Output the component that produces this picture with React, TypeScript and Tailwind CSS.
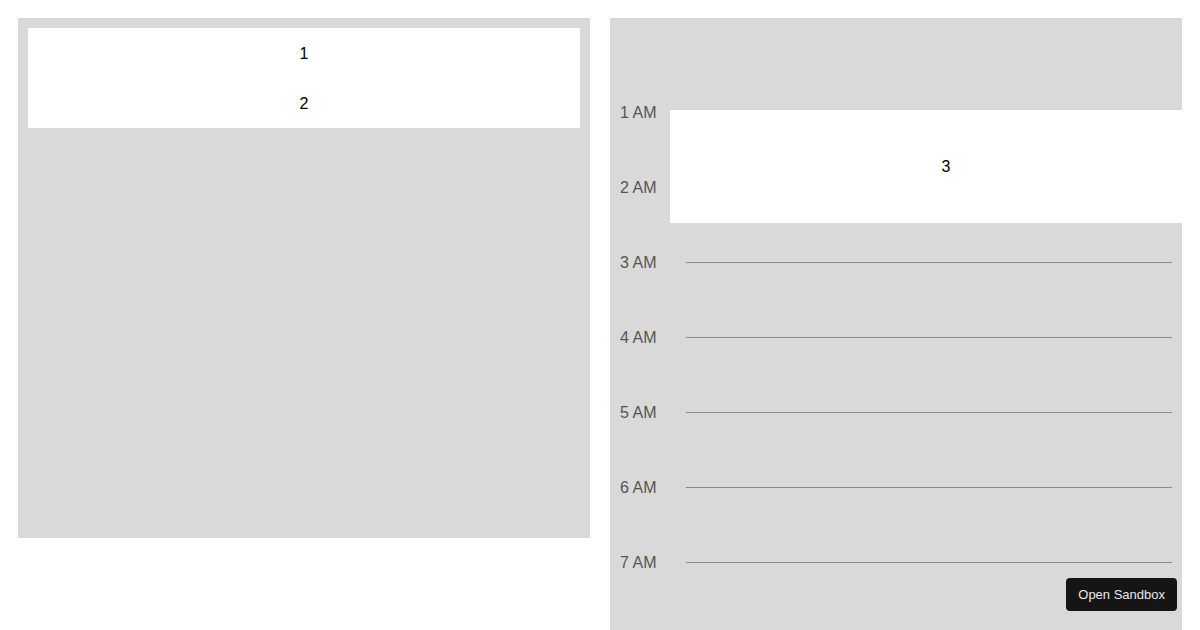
const hours = ["1 AM", "2 AM", "3 AM", "4 AM", "5 AM", "6 AM", "7 AM"];

function ListPanel() {
  return (
    <div className="h-[520px] w-[572px] shrink-0 bg-[#d9d9d9] p-[10px]">
      <div className="bg-white">
        {["1", "2"].map((n) => (
          <div key={n} className="flex h-[50px] items-center justify-center pt-[2px] text-black">
            {n}
          </div>
        ))}
      </div>
    </div>
  );
}

function HourRow({ label }: { label: string }) {
  return (
    <div className="flex h-[75px] items-center">
      <div className="w-[76px] shrink-0 pl-[10px] text-[#555]">{label}</div>
      <div className="mr-[10px] h-px flex-1 bg-[#8a8a8a]" />
    </div>
  );
}

function SchedulePanel() {
  return (
    <div className="relative h-[660px] w-[572px] shrink-0 overflow-hidden bg-[#d9d9d9] pt-[57px]">
      {hours.map((h) => (
        <HourRow key={h} label={h} />
      ))}
      {/* event block sits over the grid, wider than the panel */}
      <div className="absolute top-[92px] left-[60px] right-[-40px] flex h-[113px] items-center justify-center bg-white text-black">
        3
      </div>
    </div>
  );
}

export default function App() {
  return (
    <div className="h-[630px] w-[1200px] overflow-hidden bg-white font-['Liberation_Sans',Arial,sans-serif] text-base">
      <div className="flex gap-[20px] p-[18px]">
        <ListPanel />
        <SchedulePanel />
      </div>
      <button className="fixed right-[23px] bottom-[19px] h-[33px] rounded-[4px] bg-[#151515] px-[12px] text-[13px] text-[#e8e8e8]">
        Open Sandbox
      </button>
    </div>
  );
}
